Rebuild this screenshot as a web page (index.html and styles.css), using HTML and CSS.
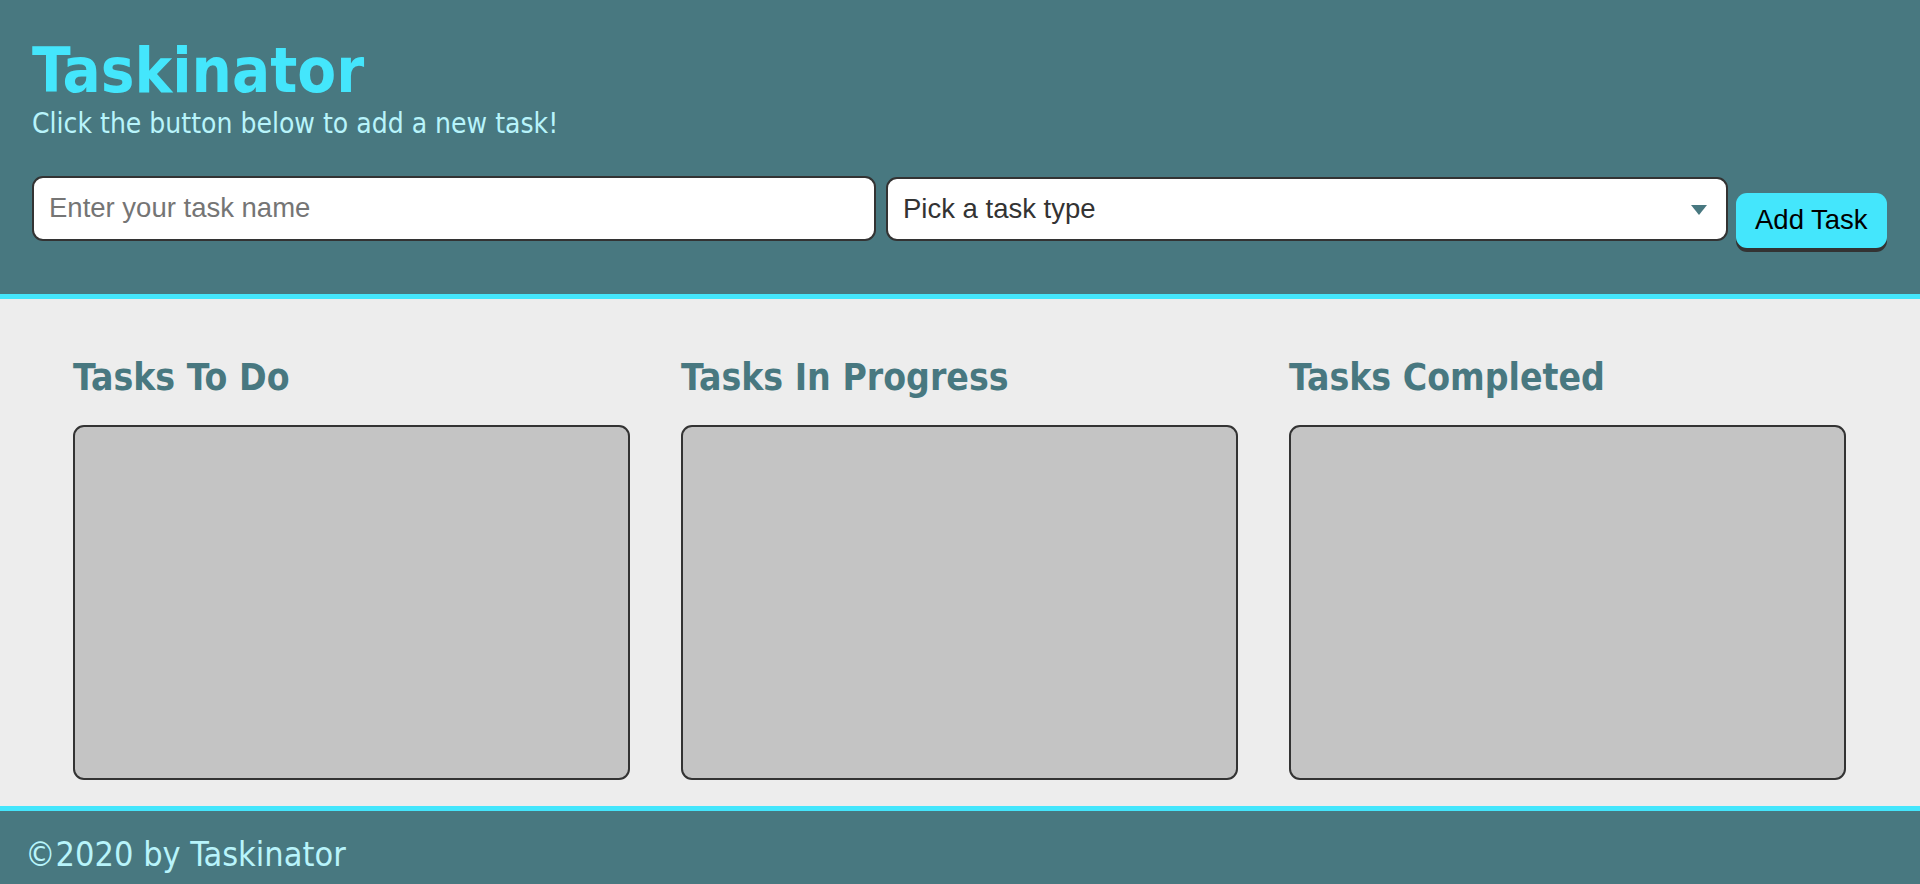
FILE: index.html
```html
<!DOCTYPE html>
<html lang="en">
<head>
    <meta charset="UTF-8">
    <meta name="viewport" content="width=device-width, initial-scale=1.0">
    <title>Taskinator</title>
    <link rel="stylesheet" href="styles.css">
</head>
<body>
    <header class="header">
        <h1 class="page-title">Taskinator</h1>
        <p>Click the button below to add a new task!</p>
        <form class="task-form" id="task-form">
            <input type="text" name="task-name" class="text-input" placeholder="Enter your task name">
            <div class="select-wrap">
                <select name="task-type" class="select-input">
                    <option value="" disabled selected>Pick a task type</option>
                    <option value="Web">Web</option>
                    <option value="Mobile">Mobile</option>
                    <option value="Print">Print</option>
                </select>
            </div>
            <button class="btn" type="submit">Add Task</button>
        </form>
    </header>

    <main class="page-content">
        <section class="task-list-wrapper">
            <h2 class="list-title">Tasks To Do</h2>
            <ul class="task-list" id="tasks-to-do"></ul>
        </section>
        <section class="task-list-wrapper">
            <h2 class="list-title">Tasks In Progress</h2>
            <ul class="task-list" id="tasks-in-progress"></ul>
        </section>
        <section class="task-list-wrapper">
            <h2 class="list-title">Tasks Completed</h2>
            <ul class="task-list" id="tasks-completed"></ul>
        </section>
    </main>

    <footer class="footer">
        <h3>&copy;2020 by Taskinator</h3>
    </footer>
</body>
</html>
```

FILE: styles.css
```css
* {
    box-sizing: border-box;
}

body {
    margin: 0;
    font-family: "DejaVu Sans Condensed", "DejaVu Sans", Verdana, sans-serif;
    font-stretch: condensed;
    background-color: #ededed;
}

/* header */
.header {
    background-color: #487880;
    border-bottom: 5px solid #44e6fc;
    padding: 39px 32px 46px;
}

.page-title {
    margin: 0;
    font-size: 63px;
    line-height: 1;
    color: #44e6fc;
}

.header p {
    margin: 5px 0 0;
    font-size: 28px;
    line-height: 1.2;
    color: #b8f4fb;
}

.task-form {
    display: flex;
    align-items: flex-start;
    gap: 10px;
    margin-top: 35px;
}

.text-input,
.select-input {
    font-family: "Liberation Sans", Arial, sans-serif;
    font-size: 27.5px;
    background-color: #fff;
    border: 2px solid #333;
    border-radius: 11px;
    padding: 0 15px;
}

.text-input {
    width: 844px;
    height: 65px;
    flex-shrink: 0;
}

.text-input::placeholder {
    color: #757575;
}

.select-wrap {
    position: relative;
    width: 842px;
    margin-top: 1px;
}

.select-input {
    width: 100%;
    height: 64px;
    color: #333;
    appearance: none;
    -webkit-appearance: none;
}

.select-wrap::after {
    content: "";
    position: absolute;
    right: 21px;
    top: 28px;
    border-left: 8px solid transparent;
    border-right: 8px solid transparent;
    border-top: 10px solid #487880;
    pointer-events: none;
}

.btn {
    flex-shrink: 0;
    white-space: nowrap;
    margin-top: 17px;
    margin-left: -2px;
    height: 55px;
    padding: 0 19px;
    font-family: "Liberation Sans", Arial, sans-serif;
    font-size: 27.5px;
    color: #000;
    background-color: #44e6fc;
    border: none;
    border-radius: 11px;
    box-shadow: 0 4px 0 #333;
}

/* task columns */
.page-content {
    display: grid;
    grid-template-columns: repeat(3, 557px);
    column-gap: 51px;
    padding: 57px 73px 26px;
}

.list-title {
    margin: 0 0 25px;
    font-size: 37px;
    line-height: 1.2;
    color: #487880;
}

.task-list {
    list-style: none;
    margin: 0;
    padding: 0;
    height: 355px;
    background-color: #c4c4c4;
    border: 2px solid #333;
    border-radius: 11px;
}

/* footer */
.footer {
    background-color: #487880;
    border-top: 5px solid #44e6fc;
    padding: 23px 25px 30px;
}

.footer h3 {
    margin: 0;
    font-size: 34px;
    font-weight: normal;
    line-height: 1.2;
    color: #b8f4fb;
}
```
